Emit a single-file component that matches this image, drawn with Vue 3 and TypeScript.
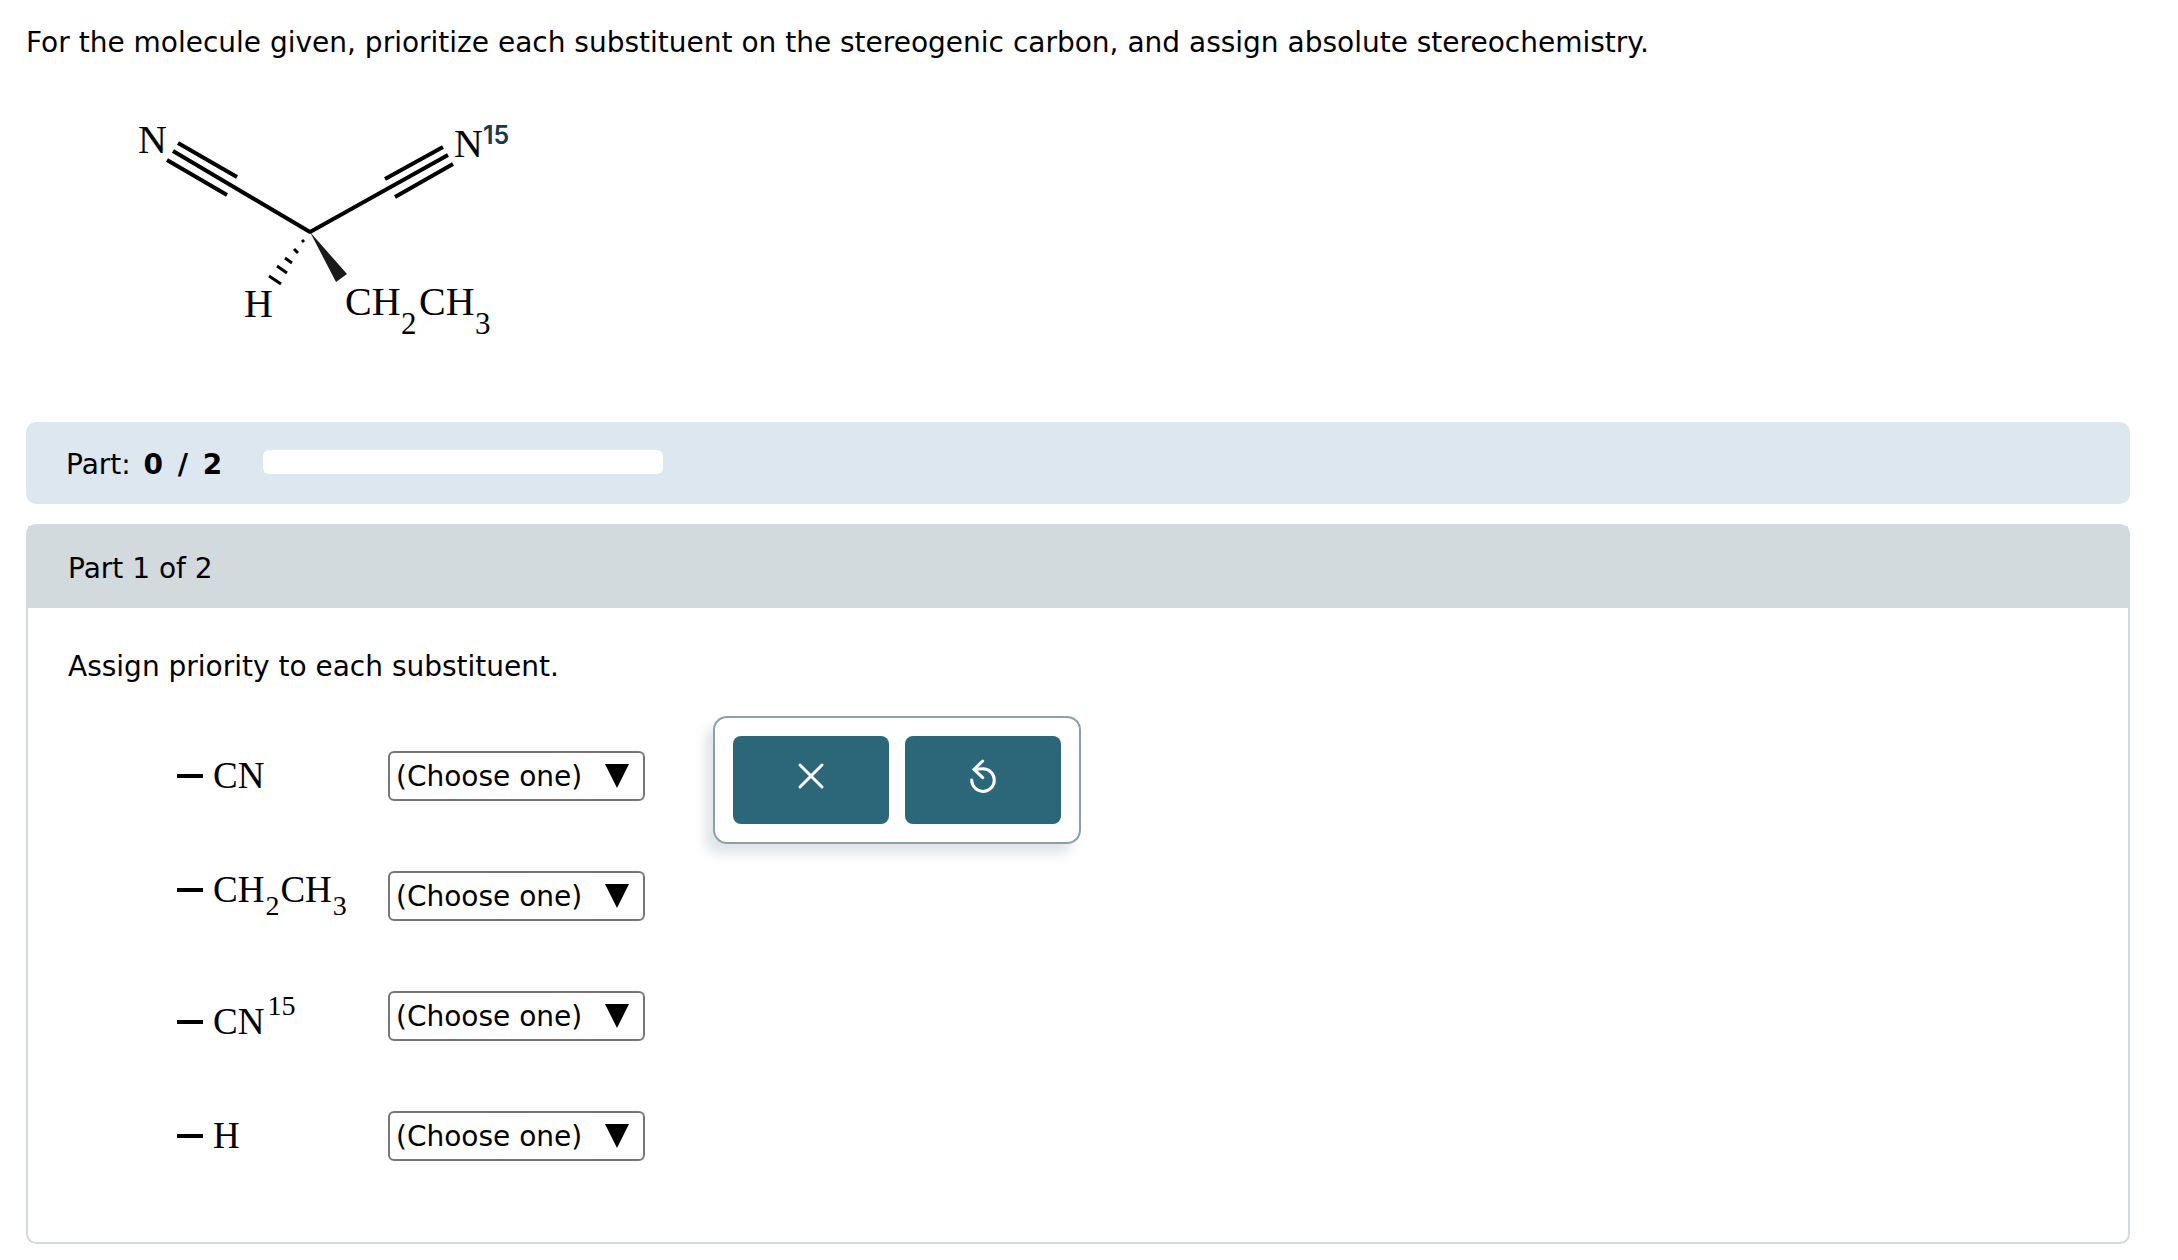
<script setup lang="ts">
import { ref } from 'vue'

type Piece = { text: string; kind: 'base' | 'sub' | 'sup' }
interface Substituent {
  id: string
  shape: 'plain' | 'lowered' | 'raised'
  pieces: Piece[]
}

const substituents: Substituent[] = [
  { id: 'cyano', shape: 'plain', pieces: [{ text: 'CN', kind: 'base' }] },
  {
    id: 'ethyl',
    shape: 'lowered',
    pieces: [
      { text: 'CH', kind: 'base' },
      { text: '2', kind: 'sub' },
      { text: 'CH', kind: 'base' },
      { text: '3', kind: 'sub' },
    ],
  },
  {
    id: 'cyano-15',
    shape: 'raised',
    pieces: [
      { text: 'CN', kind: 'base' },
      { text: '15', kind: 'sup' },
    ],
  },
  { id: 'hydrogen', shape: 'plain', pieces: [{ text: 'H', kind: 'base' }] },
]

const emptyAnswers = (): string[] => substituents.map(() => '')
const answers = ref<string[]>(emptyAnswers())
const reset = () => {
  answers.value = emptyAnswers()
}
</script>

<template>
  <main class="page">
    <p class="prompt">
      For the molecule given, prioritize each substituent on the stereogenic carbon, and assign absolute stereochemistry.
    </p>

    <svg class="molecule" viewBox="26 80 520 280" role="img" aria-label="Stereogenic carbon with four substituents">
      <g class="bond">
        <path d="M173 151 310 232 448 155" />
        <path d="M178 143 237 177M167 160 227 195" />
        <path d="M385 179 443 147M395 197 453 164" />
      </g>
      <g class="hash">
        <path d="M302 240 304 242M294 249 298 253M285 258 292 263M277 266 287 273M269 276 281 284" />
      </g>
      <path class="wedge" d="M310 232 347 274 336 282Z" />
      <text class="atom" x="138" y="153">N</text>
      <text class="atom" x="454" y="157">N</text>
      <text class="isotope" x="483" y="144">15</text>
      <text class="atom" x="244" y="317">H</text>
      <text class="atom" x="345" y="315">CH</text>
      <text class="atom-count" x="401" y="334">2</text>
      <text class="atom" x="419" y="315">CH</text>
      <text class="atom-count" x="475" y="334">3</text>
    </svg>

    <section class="progress">
      <span class="progress-label">Part: <b>0 <span class="slash">/</span> 2</b></span>
      <div class="track" role="progressbar" aria-label="Parts completed" aria-valuenow="0" aria-valuemin="0" aria-valuemax="2"></div>
    </section>

    <section class="card">
      <h2 class="card-title">Part 1 of 2</h2>
      <div class="card-body">
        <p class="instruction">Assign priority to each substituent.</p>
        <div class="work">
          <div class="rows">
            <div v-for="(item, i) in substituents" :key="item.id" class="row">
              <label :for="item.id" class="formula" :class="item.shape">
                <span class="dash"></span>
                <span><span v-for="(piece, j) in item.pieces" :key="j" :class="piece.kind">{{ piece.text }}</span></span>
              </label>
              <div class="picker">
                <select :id="item.id" v-model="answers[i]">
                  <option value="">(Choose one)</option>
                  <option v-for="n in 4" :key="n" :value="String(n)">{{ n }}</option>
                </select>
                <svg class="arrow" viewBox="0 0 24 24" aria-hidden="true"><path d="M0 0H24L12 24Z" /></svg>
              </div>
            </div>
          </div>
          <div class="tools">
            <button type="button" aria-label="Clear" @click="reset">
              <svg viewBox="0 0 40 40" aria-hidden="true"><path d="M9 9 31 31M31 9 9 31" /></svg>
            </button>
            <button type="button" aria-label="Reset" @click="reset">
              <svg viewBox="0 0 40 40" aria-hidden="true">
                <path d="M8.7 24A11.3 11.3 0 1 0 20 12.8Q16 12.8 11 13.4M19.7 5 11 13.4 19.7 21.6" />
              </svg>
            </button>
          </div>
        </div>
      </div>
    </section>
  </main>
</template>

<style>
body {
  background: #fff;
}
</style>

<style scoped>
* {
  box-sizing: border-box;
}
.page {
  padding: 25px 48px 16px 26px;
  font: 28px/36px Verdana, "DejaVu Sans", sans-serif;
  color: #000;
}
p,
h2 {
  margin: 0;
  font-size: 28px;
  font-weight: 400;
}
.molecule {
  display: block;
  width: 520px;
  height: 280px;
  margin: 19px 0 62px;
}
.bond path {
  fill: none;
  stroke: #000;
  stroke-width: 4;
  stroke-linejoin: bevel;
}
.hash path {
  fill: none;
  stroke: #000;
  stroke-width: 3;
}
.wedge {
  fill: #1a1a1a;
}
.atom {
  font: 40px "Liberation Serif", serif;
}
.atom-count {
  font: 31px "Liberation Serif", serif;
}
.isotope {
  font: 600 25px Inter, sans-serif;
  fill: #17384a;
}
.progress {
  display: flex;
  align-items: center;
  gap: 40px;
  height: 82px;
  padding: 0 40px;
  border-radius: 10px;
  background: #dde7f0;
}
.progress-label {
  min-width: 157px;
  padding-top: 4px;
}
.progress-label b {
  margin-left: 4px;
}
.slash {
  margin: 0 5px;
}
.track {
  width: 400px;
  height: 24px;
  margin-bottom: 2px;
  border-radius: 6px;
  background: #fff;
}
.card {
  margin-top: 20px;
  border: 2px solid #d3dadd;
  border-radius: 10px;
}
.card-title {
  padding: 25px 40px 21px;
  background: #d3dadd;
}
.card-body {
  padding: 41px 40px 81px;
}
.work {
  display: flex;
  align-items: flex-start;
  margin-top: 31px;
}
.rows {
  display: flex;
  flex-direction: column;
  gap: 70px;
  padding-top: 35px;
  padding-left: 109px;
}
.row {
  display: flex;
  align-items: center;
  height: 50px;
}
.formula {
  display: flex;
  align-items: center;
  gap: 10px;
  width: 211px;
  font: 37px/50px "Liberation Serif", serif;
}
.lowered {
  padding-bottom: 12px;
}
.raised {
  padding-top: 12px;
}
.dash {
  width: 26px;
  height: 4px;
  background: #000;
}
.sub,
.sup {
  font-size: 28px;
  line-height: 0;
}
.sub {
  margin: 0 1px;
  vertical-align: -13px;
}
.sup {
  margin-left: 3px;
  vertical-align: 19px;
}
.picker {
  position: relative;
}
.picker select {
  display: block;
  width: 257px;
  height: 50px;
  padding: 1px 40px 0 6px;
  appearance: none;
  border: 2px solid #777;
  border-radius: 6px;
  background: #fff;
  color: #000;
  font: 28px Verdana, "DejaVu Sans", sans-serif;
}
.arrow {
  position: absolute;
  top: 13px;
  right: 16px;
  width: 24px;
  height: 24px;
  pointer-events: none;
}
.tools {
  display: flex;
  gap: 16px;
  margin-left: 68px;
  padding: 18px;
  border: 2px solid #8aa0aa;
  border-radius: 14px;
  background: #fff;
  box-shadow: -8px 10px 12px rgba(44, 80, 100, 0.15);
}
.tools button {
  display: flex;
  justify-content: center;
  width: 156px;
  height: 88px;
  padding: 20px 0 0;
  border: 0;
  border-radius: 8px;
  background: #2c6779;
  cursor: pointer;
}
.tools svg {
  width: 40px;
  height: 40px;
  fill: none;
  stroke: #fff;
  stroke-width: 3;
  stroke-linecap: round;
}
</style>
